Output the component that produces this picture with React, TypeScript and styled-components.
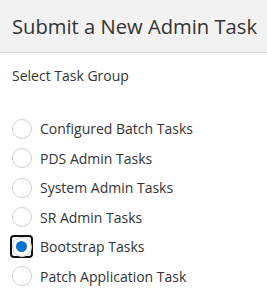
import React, { useState } from 'react';
import styled, { createGlobalStyle } from 'styled-components';

const GlobalStyle = createGlobalStyle`
  html, body {
    margin: 0;
    padding: 0;
    background: #ffffff;
  }
  body {
    font-family: 'Open Sans', 'Noto Sans', sans-serif;
    color: #333333;
  }
`;

const groups = [
  'Configured Batch Tasks',
  'PDS Admin Tasks',
  'System Admin Tasks',
  'SR Admin Tasks',
  'Bootstrap Tasks',
  'Patch Application Task',
];

const App = () => {
  const [selected, setSelected] = useState<number>(4);

  return (
    <>
      <GlobalStyle />
      <Panel>
        <Header>
          <Title>Submit a New Admin Task</Title>
        </Header>
        <Body>
          <Label>Select Task Group</Label>
          <RadioList>
            {groups.map((name, index) => (
              <Option key={name} onClick={() => setSelected(index)}>
                <RadioBox focused={selected === index}>
                  <Circle checked={selected === index} />
                </RadioBox>
                <OptionText>{name}</OptionText>
              </Option>
            ))}
          </RadioList>
        </Body>
      </Panel>
    </>
  );
};

export default App;

interface IChecked {
  checked: boolean;
}
interface IFocused {
  focused: boolean;
}

const Panel = styled.div`
  width: 267px;
  height: 308px;
  overflow: hidden;
`;

const Header = styled.div`
  height: 53px;
  background-color: #f2f2f2;
  border-bottom: 1px solid #d6d6d6;
  display: flex;
  align-items: center;
  padding: 0 12px;
  box-sizing: border-box;
`;

const Title = styled.h1`
  margin: 0;
  font-size: 20.2px;
  font-weight: 400;
  color: #333333;
  white-space: nowrap;
`;

const Body = styled.div`
  padding: 13px 12px 0 10px;
`;

const Label = styled.div`
  font-size: 14px;
  color: #333333;
  padding-left: 2px;
  margin-bottom: 29px;
`;

const RadioList = styled.div`
  display: flex;
  flex-direction: column;
`;

const Option = styled.label`
  display: flex;
  align-items: center;
  height: 29.5px;
  cursor: pointer;
`;

const RadioBox = styled.span<IFocused>`
  width: 23px;
  height: 23px;
  box-sizing: border-box;
  border: 2px solid ${props => (props.focused ? '#111111' : 'transparent')};
  border-radius: 4px;
  display: flex;
  align-items: center;
  justify-content: center;
  margin-right: 7px;
`;

const Circle = styled.span<IChecked>`
  width: 20px;
  height: 20px;
  box-sizing: border-box;
  border-radius: 50%;
  border: 1.5px solid #d0d0d0;
  background-color: #ffffff;
  position: relative;
  flex-shrink: 0;
  &::after {
    content: '';
    display: ${props => (props.checked ? 'block' : 'none')};
    position: absolute;
    width: 11px;
    height: 11px;
    border-radius: 50%;
    background-color: #0572ce;
    top: 3px;
    left: 3px;
  }
`;

const OptionText = styled.span`
  font-size: 14px;
  color: #333333;
  white-space: nowrap;
`;
